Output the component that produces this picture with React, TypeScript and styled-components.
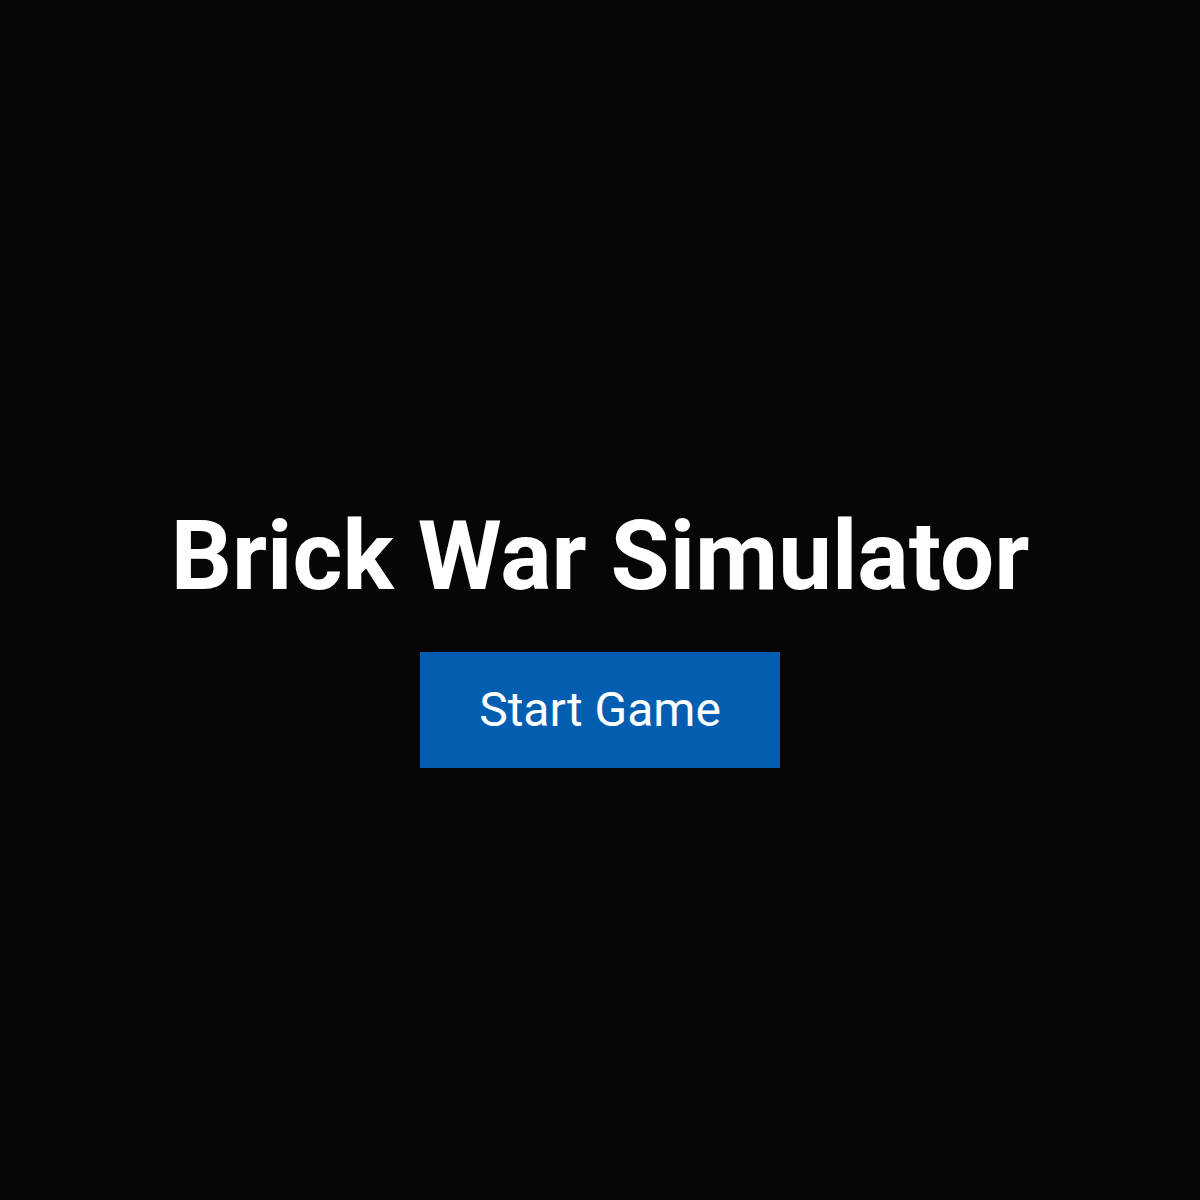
import React from "react";
import styled, { createGlobalStyle } from "styled-components";

const GlobalStyle = createGlobalStyle`
  html, body {
    margin: 0;
    padding: 0;
    background: #060606;
  }
  body {
    font-family: Roboto, "Liberation Sans", Arial, sans-serif;
  }
`;

const Screen = styled.main`
  height: 1200px;
  display: flex;
  flex-direction: column;
  align-items: center;
  justify-content: center;
  background: #060606;
`;

const Title = styled.h1`
  margin: 67px 0 40px;
  font-family: Roboto, "Liberation Sans", Arial, sans-serif;
  font-size: 96px;
  font-weight: 700;
  color: #ffffff;
  line-height: normal;
`;

const StartButton = styled.button`
  box-sizing: border-box;
  width: 360px;
  height: 116px;
  padding: 0;
  border: none;
  border-radius: 0;
  background: #035eb2;
  color: #ffffff;
  font-family: Roboto, "Liberation Sans", Arial, sans-serif;
  font-size: 48px;
  font-weight: 400;
  text-align: center;
  white-space: nowrap;
  cursor: pointer;
`;

export default function App() {
  return (
    <>
      <GlobalStyle />
      <Screen>
        <Title>Brick War Simulator</Title>
        <StartButton>Start Game</StartButton>
      </Screen>
    </>
  );
}
